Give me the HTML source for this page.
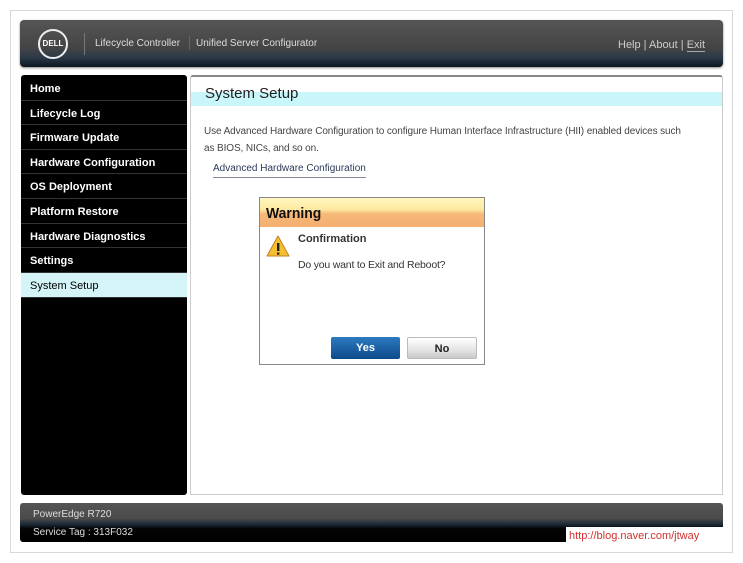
<!DOCTYPE html>
<html><head><meta charset="utf-8"><style>
*{margin:0;padding:0;box-sizing:border-box}
body{width:743px;height:563px;background:#fff;position:relative;overflow:hidden;font-family:"Liberation Sans",sans-serif;}
.abs{position:absolute}
.frame{left:10px;top:10px;width:723px;height:543px;border:1px solid #d8d8d8;background:#fff}
.hdr{left:20px;top:20px;width:703px;height:47px;border-radius:4px;background:linear-gradient(#555 0,#444 60%,#2a3a48 80%,#0b1520 100%);box-shadow:0 1px 2px #888}
.logo{left:38px;top:29px;width:30px;height:30px;border:2px solid #eee;border-radius:50%;color:#fff;font-size:8px;font-weight:bold;text-align:center;line-height:26px}
.htxt{color:#ddd;font-size:10px;top:38px}
.side{left:21px;top:75px;width:166px;height:420px;background:#000;border-radius:3px}
.item{position:absolute;left:0;width:166px;height:24.6px;border-bottom:1px solid #333;color:#fff;font-weight:bold;font-size:11px;padding-left:9px;line-height:26px}
.sel{background:#d4f4f8;color:#000;font-weight:normal}
.main{left:190px;top:75px;width:533px;height:420px;border:1px solid #ccc;border-top:2px solid #888;border-radius:3px 3px 0 0}
.band{left:191px;top:92px;width:531px;height:14px;background:#c8f6fb}
.foot{left:20px;top:503px;width:703px;height:39px;border-radius:3px;background:linear-gradient(#555 0,#4a4a4a 40%,#1a2a38 55%,#050505 65%,#000 100%)}
.btn{font-size:11px;font-weight:bold;text-align:center;line-height:22px;border-radius:2px}
</style></head><body>
<div class="abs frame"></div>
<div class="abs hdr"></div>
<div class="abs logo">DELL</div>
<div class="abs" style="left:84px;top:33px;width:1px;height:22px;background:#777"></div>
<div class="abs htxt" style="left:95px">Lifecycle Controller</div>
<div class="abs" style="left:189px;top:36px;width:1px;height:14px;background:#666"></div>
<div class="abs htxt" style="left:196px">Unified Server Configurator</div>
<div class="abs htxt" style="left:618px;top:39px;font-size:11px;color:#ccc">Help | About | <span style="border-bottom:1px solid #aaa">Exit</span></div>
<div class="abs side">
<div class="item" style="top:1px">Home</div>
<div class="item" style="top:25.6px">Lifecycle Log</div>
<div class="item" style="top:50.2px">Firmware Update</div>
<div class="item" style="top:74.8px">Hardware Configuration</div>
<div class="item" style="top:99.4px">OS Deployment</div>
<div class="item" style="top:124px">Platform Restore</div>
<div class="item" style="top:148.6px">Hardware Diagnostics</div>
<div class="item" style="top:173.2px">Settings</div>
<div class="item sel" style="top:198px">System Setup</div>
</div>
<div class="abs main"></div>
<div class="abs band"></div>
<div class="abs" style="left:205px;top:85px;font-size:15px;color:#222">System Setup</div>
<div class="abs" style="left:204px;top:123px;font-size:10px;color:#444;line-height:17px;width:488px;letter-spacing:-0.1px">Use Advanced Hardware Configuration to configure Human Interface Infrastructure (HII) enabled devices such as BIOS, NICs, and so on.</div>
<div class="abs" style="left:213px;top:163px;font-size:10px;color:#2a3a5a;border-bottom:1px solid #889;padding-bottom:3px">Advanced Hardware Configuration</div>
<div class="abs" style="left:259px;top:197px;width:226px;height:168px;border:1px solid #888;background:#fff"></div>
<div class="abs" style="left:260px;top:198px;width:224px;height:29px;background:linear-gradient(#fff8c0 0,#fde8a0 40%,#f6b878 55%,#f4b070 100%)"></div>
<div class="abs" style="left:266px;top:205px;font-size:15px;color:#111;font-weight:bold;transform:scaleX(.93);transform-origin:left">Warning</div>
<svg class="abs" style="left:265px;top:234px" width="26" height="24"><path d="M13 2 L24 22 L2 22 Z" fill="#f4c030" stroke="#c08020" stroke-linejoin="round"/><rect x="12" y="9" width="2.4" height="8" fill="#222"/><rect x="12" y="18.5" width="2.4" height="2.2" fill="#222"/></svg>
<div class="abs" style="left:298px;top:233px;font-size:11px;font-weight:bold;color:#333">Confirmation</div>
<div class="abs" style="left:298px;top:259px;font-size:10.5px;color:#333;letter-spacing:-0.2px">Do you want to Exit and Reboot?</div>
<div class="abs btn" style="left:331px;top:337px;width:69px;height:22px;background:linear-gradient(#2d7ac0,#0c4a8a);color:#fff">Yes</div>
<div class="abs btn" style="left:407px;top:337px;width:70px;height:22px;background:linear-gradient(#fff,#e4e4e4 60%,#c8c8c8);border:1px solid #bbb;color:#222">No</div>
<div class="abs foot"></div>
<div class="abs" style="left:33px;top:509px;font-size:10px;color:#ddd">PowerEdge R720</div>
<div class="abs" style="left:33px;top:527px;font-size:10px;color:#ddd">Service Tag : 313F032</div>
<div class="abs" style="left:566px;top:527px;width:157px;height:18px;background:#fff;color:#d03030;font-size:11px;padding-left:3px;line-height:18px">http://blog.naver.com/jtway</div>
</body></html>
